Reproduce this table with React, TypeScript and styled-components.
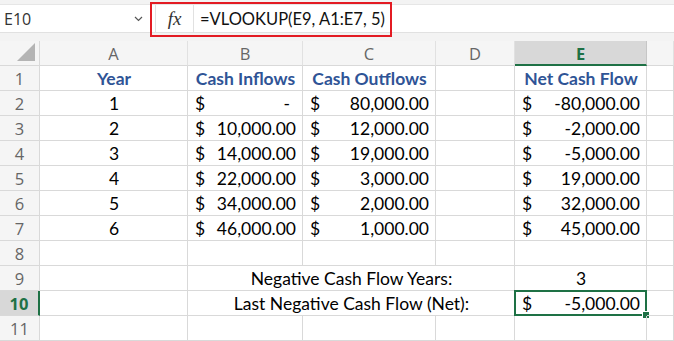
import { FC } from 'react'
import styled, { createGlobalStyle } from 'styled-components'

const GlobalStyle = createGlobalStyle`
  html, body {
    margin: 0;
    padding: 0;
    background: #ffffff;
    overflow: hidden;
  }
  body {
    font-family: Lato, 'Liberation Sans', sans-serif;
  }
`

const GRID = '#d9d9d9'
const GREEN = '#1e7145'
const HEAD_BLUE = '#2f5496'

const Page = styled.div({
  width: 674,
  height: 341,
  background: '#f3f3f3',
  display: 'flex',
  flexDirection: 'column',
  overflow: 'hidden',
})

const FormulaBar = styled.div({
  marginTop: 4,
  height: 31,
  background: '#ffffff',
  display: 'flex',
  alignItems: 'stretch',
  borderTop: '1px solid #e6e6e6',
  borderBottom: '1px solid #e1e1e1',
})

const NameBox = styled.div({
  width: 148,
  display: 'flex',
  alignItems: 'center',
  justifyContent: 'space-between',
  padding: '0 4px 0 4px',
  boxSizing: 'border-box',
  fontFamily: "'Open Sans', 'Noto Sans', sans-serif",
  fontSize: 16,
  color: '#333',
})

const Chevron = styled.svg({
  width: 9,
  height: 6,
  marginRight: 1,
})

const FormulaFrame = styled.div({
  position: 'relative',
  flex: 1,
  display: 'flex',
  alignItems: 'center',
})

const Highlight = styled.div({
  position: 'absolute',
  left: 2,
  top: -3,
  width: 242,
  height: 35,
  boxSizing: 'border-box',
  border: '2.5px solid #e31b23',
  pointerEvents: 'none',
})

const FxBox = styled.div({
  marginLeft: 7,
  width: 37,
  alignSelf: 'stretch',
  display: 'flex',
  alignItems: 'center',
  justifyContent: 'center',
  borderLeft: '1px solid #e1e1e1',
  borderRight: '1px solid #e1e1e1',
  fontFamily: "'Liberation Serif', serif",
  fontStyle: 'italic',
  fontSize: 19,
  color: '#333',
})

const FormulaText = styled.div({
  paddingLeft: 6,
  fontFamily: "Lato, 'Liberation Sans', sans-serif",
  fontSize: 16.5,
  color: '#111',
  whiteSpace: 'nowrap',
})

const Sheet = styled.div({
  marginTop: 8,
  flex: 1,
  display: 'grid',
  gridTemplateColumns: '40px 148px 115px 133px 79px 132px 1fr',
  gridAutoRows: 25,
  background: '#ffffff',
})

const Corner = styled.div({
  background: '#f5f5f5',
  borderRight: `1px solid ${GRID}`,
  borderBottom: `1px solid ${GRID}`,
  display: 'flex',
  alignItems: 'flex-end',
  justifyContent: 'flex-end',
  padding: '0 4px 4px 0',
})

const ColHead = styled.div<{ $active?: boolean }>(({ $active }) => ({
  background: $active ? '#d8d8d8' : '#f5f5f5',
  borderRight: `1px solid ${$active ? '#c6c6c6' : '#e1e1e1'}`,
  borderBottom: $active ? `2px solid ${GREEN}` : `1px solid ${GRID}`,
  display: 'flex',
  alignItems: 'center',
  justifyContent: 'center',
  paddingTop: 1,
  fontFamily: "'Open Sans', 'Noto Sans', sans-serif",
  fontSize: 16.5,
  fontWeight: $active ? 700 : 400,
  color: $active ? GREEN : '#666',
}))

const RowHead = styled.div<{ $active?: boolean }>(({ $active }) => ({
  background: $active ? '#d8d8d8' : '#f5f5f5',
  borderRight: $active ? `2px solid ${GREEN}` : `1px solid ${GRID}`,
  borderBottom: `1px solid ${GRID}`,
  display: 'flex',
  alignItems: 'center',
  justifyContent: 'center',
  fontFamily: "'Open Sans', 'Noto Sans', sans-serif",
  fontSize: 16.5,
  fontWeight: $active ? 700 : 400,
  color: $active ? GREEN : '#666',
}))

const Cell = styled.div<{ $align?: 'left' | 'center' | 'right'; $span?: number; $bold?: boolean }>(
  ({ $align = 'left', $span = 1, $bold }) => ({
    gridColumn: `span ${$span}`,
    position: 'relative',
    borderRight: `1px solid ${GRID}`,
    borderBottom: `1px solid ${GRID}`,
    display: 'flex',
    alignItems: 'center',
    justifyContent: $align === 'center' ? 'center' : $align === 'right' ? 'flex-end' : 'flex-start',
    padding: '1px 6px 0 7px',
    fontSize: 17.5,
    fontWeight: $bold ? 700 : 400,
    color: $bold ? HEAD_BLUE : '#000',
    whiteSpace: 'nowrap',
    overflow: 'visible',
  }),
)

const Money = styled.div({
  flex: 1,
  display: 'flex',
  justifyContent: 'space-between',
})

const Selection = styled.div({
  position: 'absolute',
  left: -1,
  top: -1,
  right: -1,
  bottom: -1,
  border: `2px solid ${GREEN}`,
  pointerEvents: 'none',
})

const Handle = styled.div({
  position: 'absolute',
  right: -4,
  bottom: -4,
  width: 6,
  height: 6,
  background: GREEN,
  border: '1px solid #fff',
})

interface IRow {
  year: number
  inflow: string
  outflow: string
  net: string
}

const rows: IRow[] = [
  { year: 1, inflow: '-', outflow: '80,000.00', net: '-80,000.00' },
  { year: 2, inflow: '10,000.00', outflow: '12,000.00', net: '-2,000.00' },
  { year: 3, inflow: '14,000.00', outflow: '19,000.00', net: '-5,000.00' },
  { year: 4, inflow: '22,000.00', outflow: '3,000.00', net: '19,000.00' },
  { year: 5, inflow: '34,000.00', outflow: '2,000.00', net: '32,000.00' },
  { year: 6, inflow: '46,000.00', outflow: '1,000.00', net: '45,000.00' },
]

const columns = ['A', 'B', 'C', 'D', 'E', '']

const Accounting: FC<{ value: string }> = ({ value }) => (
  <Money>
    <span>$</span>
    <span style={{ paddingRight: value === '-' ? 6 : 0 }}>{value}</span>
  </Money>
)

const FragmentRow: FC<{ index: number; row: IRow }> = ({ index, row }) => (
  <>
    <RowHead>{index}</RowHead>
    <Cell $align='center'>{row.year}</Cell>
    <Cell>
      <Accounting value={row.inflow} />
    </Cell>
    <Cell>
      <Accounting value={row.outflow} />
    </Cell>
    <Cell />
    <Cell>
      <Accounting value={row.net} />
    </Cell>
    <Cell />
  </>
)

const EmptyRow: FC<{ index: number }> = ({ index }) => (
  <>
    <RowHead>{index}</RowHead>
    <Cell />
    <Cell />
    <Cell />
    <Cell />
    <Cell />
    <Cell />
  </>
)

const App: FC = () => {
  return (
    <Page>
      <GlobalStyle />
      <FormulaBar>
        <NameBox>
          <span>E10</span>
          <Chevron viewBox='0 0 9 6'>
            <path d='M1 1 L4.5 4.5 L8 1' fill='none' stroke='#555' strokeWidth='1.2' />
          </Chevron>
        </NameBox>
        <FormulaFrame>
          <Highlight />
          <FxBox>fx</FxBox>
          <FormulaText>=VLOOKUP(E9, A1:E7, 5)</FormulaText>
        </FormulaFrame>
      </FormulaBar>

      <Sheet>
        <Corner>
          <svg width='18' height='18' viewBox='0 0 18 18'>
            <path d='M18 0 L18 18 L0 18 Z' fill='#b4b4b4' />
          </svg>
        </Corner>
        {columns.map((c, i) => (
          <ColHead key={i} $active={c === 'E'}>
            {c}
          </ColHead>
        ))}

        <RowHead>1</RowHead>
        <Cell $align='center' $bold>Year</Cell>
        <Cell $align='center' $bold>Cash Inflows</Cell>
        <Cell $align='center' $bold>Cash Outflows</Cell>
        <Cell />
        <Cell $align='center' $bold>Net Cash Flow</Cell>
        <Cell />

        {rows.map((r, i) => (
          <FragmentRow key={r.year} index={i + 2} row={r} />
        ))}

        <EmptyRow index={8} />

        <RowHead>9</RowHead>
        <Cell />
        <Cell $span={3} $align='center'>Negative Cash Flow Years:</Cell>
        <Cell $align='center'>3</Cell>
        <Cell />

        <RowHead $active>10</RowHead>
        <Cell />
        <Cell $span={3} $align='center'>Last Negative Cash Flow (Net):</Cell>
        <Cell>
          <Accounting value='-5,000.00' />
          <Selection />
          <Handle />
        </Cell>
        <Cell />

        <EmptyRow index={11} />
      </Sheet>
    </Page>
  )
}

export default App
